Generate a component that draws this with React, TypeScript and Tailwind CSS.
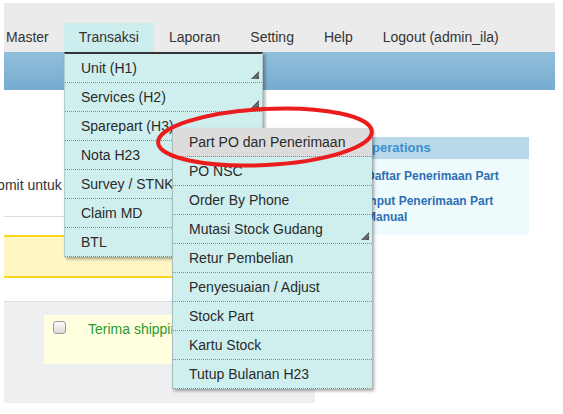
const transaksiItems = [
  { label: "Unit (H1)", sub: true },
  { label: "Services (H2)", sub: true },
  { label: "Sparepart (H3)", sub: false },
  { label: "Nota H23", sub: false },
  { label: "Survey / STNK", sub: false },
  { label: "Claim MD", sub: false },
  { label: "BTL", sub: false },
];

const sparepartItems = [
  { label: "Part PO dan Penerimaan", sub: false, active: true },
  { label: "PO NSC", sub: false },
  { label: "Order By Phone", sub: false },
  { label: "Mutasi Stock Gudang", sub: true },
  { label: "Retur Pembelian", sub: false },
  { label: "Penyesuaian / Adjust", sub: false },
  { label: "Stock Part", sub: false },
  { label: "Kartu Stock", sub: false },
  { label: "Tutup Bulanan H23", sub: false },
];

const navItems = ["Master", "Transaksi", "Laporan", "Setting", "Help", "Logout (admin_ila)"];

function SubArrow() {
  return (
    <svg className="absolute right-[3px] bottom-[3px]" width="8" height="8" viewBox="0 0 8 8">
      <polygon points="0,8 8,0 8,8" fill="#555" />
      <line x1="3" y1="8" x2="8" y2="3" stroke="#999" strokeWidth="0.8" />
    </svg>
  );
}

function MenuItem({ label, sub, active }: { label: string; sub?: boolean; active?: boolean }) {
  return (
    <div
      className={`relative h-[29px] flex items-center pl-[16px] border-b border-dotted border-[#8a8a8a] text-[14px] text-[#2a2a2a] ${
        active ? "bg-[#dcdcdc]" : ""
      }`}
    >
      {label}
      {sub && <SubArrow />}
    </div>
  );
}

export default function App() {
  return (
    <div className="relative w-[563px] h-[414px] overflow-hidden bg-white font-['Liberation_Sans',Arial,sans-serif]">
      <div className="h-[3px]" />

      {/* Top nav */}
      <div className="ml-[4px] mr-[8px] h-[49px] bg-[#ebebeb] flex items-end overflow-hidden">
        <div className="flex -ml-[13px]">
          {navItems.map((item) => (
            <div
              key={item}
              className={`h-[29px] px-[15px] flex items-center text-[14px] text-[#333] ${
                item === "Transaksi" ? "bg-[#cdeeee]" : ""
              }`}
            >
              {item}
            </div>
          ))}
        </div>
      </div>

      {/* Blue band */}
      <div className="ml-[4px] mr-[8px] h-[38px] bg-gradient-to-b from-[#92bfdb] to-[#76acd0]" />

      {/* Content */}
      <div className="flex ml-[4px]">
        <div className="w-[350px]">
          <p className="mt-[85px] -ml-[24px] leading-[20px] text-[14px] text-[#333] whitespace-nowrap">
            Submit untuk
          </p>
          <div className="mt-[21px] border-t border-[#dcdcdc]" />
          <div className="mt-[18px] h-[43px] w-[330px] bg-[#fff6c4] border-y-2 border-[#fcd31e]" />
          <div className="mt-[23px] h-[102px] w-[311px] bg-[#eeeff1] border-t border-[#e0e0e0] pt-[13px] pl-[40px]">
            <div className="h-[49px] bg-[#ffffe0] flex items-start pt-[6px] pl-[9px] gap-[22px]">
              <div className="w-[13px] h-[13px] rounded-[3px] border border-[#9a9a9a] bg-gradient-to-b from-[#fafafa] to-[#dcdcdc]" />
              <span className="text-[14px] leading-[16px] text-[#2b9a2e]">Terima shipping</span>
            </div>
          </div>
        </div>

        <div className="w-[175px] mt-[47px]">
          <div className="h-[22px] bg-[#b9d8ea] flex items-center pl-[8px] text-[13px] font-bold text-[#3b8fd3]">
            Operations
          </div>
          <div className="h-[76px] bg-[#eefbfd] pl-[12px] pr-[8px] pt-[9px] text-[12px] font-bold leading-[16px] text-[#2f6fb4]">
            <p>Daftar Penerimaan Part</p>
            <p className="mt-[9px] w-[135px]">Input Penerimaan Part Manual</p>
          </div>
        </div>
      </div>

      {/* Transaksi dropdown */}
      <div className="absolute left-[64px] top-[52px] w-[199px] bg-[#cfefef] border-t-2 border-[#333] shadow-[2px_2px_3px_rgba(0,0,0,0.35)] border-x border-x-[#b5c9c9]">
        {transaksiItems.map((it) => (
          <MenuItem key={it.label} label={it.label} sub={it.sub} />
        ))}
      </div>

      {/* Sparepart submenu */}
      <div className="absolute left-[172px] top-[128px] w-[200px] bg-[#cfefef] border-l border-[#a9bcbc] shadow-[2px_2px_3px_rgba(0,0,0,0.35)]">
        {sparepartItems.map((it) => (
          <MenuItem key={it.label} label={it.label} sub={it.sub} active={it.active} />
        ))}
      </div>

      {/* Red highlight ring */}
      <svg className="absolute left-0 top-0 pointer-events-none" width="563" height="414" viewBox="0 0 563 414">
        <ellipse
          cx="265"
          cy="137"
          rx="107"
          ry="28"
          transform="rotate(-3 265 137)"
          fill="none"
          stroke="#ea1c1c"
          strokeWidth="4"
        />
      </svg>
    </div>
  );
}
